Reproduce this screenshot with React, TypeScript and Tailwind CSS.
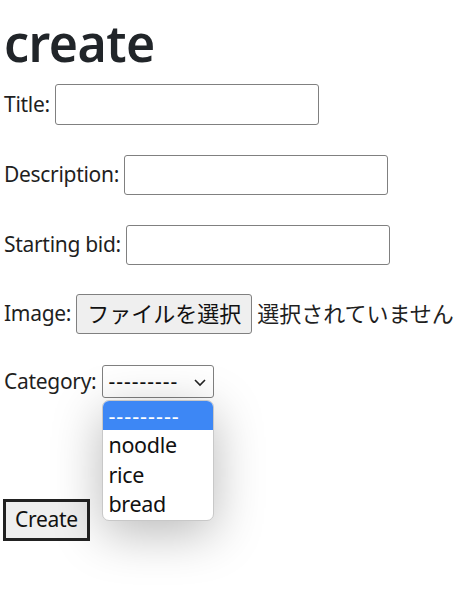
export default function App() {
  const font = "font-['Noto_Sans','Noto_Sans_CJK_JP',sans-serif]"

  return (
    <div className={`${font} min-h-[596px] bg-white pl-[4px] text-[21px] tracking-[-0.3px] text-[#1f1f1f]`}>
      {/* 見出し */}
      <h1 className="pt-[10px] text-[50px] font-semibold leading-[66px] tracking-[-0.5px] text-[#212529]">create</h1>

      <div className="mt-[8px] flex h-[41px] items-center">
        <span>Title:</span>
        <input className="ml-[5px] h-[41px] w-[264px] rounded-[3px] border border-[#808080] bg-white" />
      </div>

      <div className="mt-[29px] flex h-[41px] items-center">
        <span>Description:</span>
        <input className="ml-[5px] h-[40px] w-[264px] rounded-[3px] border border-[#808080] bg-white" />
      </div>

      <div className="mt-[29px] flex h-[41px] items-center">
        <span>Starting bid:</span>
        <input className="ml-[5px] h-[40px] w-[264px] rounded-[3px] border border-[#808080] bg-white" />
      </div>

      <div className="mt-[28px] flex h-[41px] items-center">
        <span>Image:</span>
        <button className="ml-[5px] h-[40px] rounded-[3px] border border-[#808080] bg-[#efefef] px-[10px] text-[22px] tracking-normal text-[#111]">
          ファイルを選択
        </button>
        <span className="ml-[5px] text-[22px] tracking-normal">選択されていません</span>
      </div>

      <div className="mt-[27px] flex h-[41px] items-center">
        <span>Category:</span>
        <div className="relative ml-[6px]">
          <div className="flex h-[33px] w-[112px] items-center justify-between rounded-[3px] border border-[#808080] bg-white pl-[5px] pr-[6px] text-[#111]">
            <span className="tracking-[1px]">---------</span>
            <svg width="14" height="14" viewBox="0 0 14 14" fill="none" stroke="#222" strokeWidth="1.6">
              <path d="M2 5l5 5 5-5" />
            </svg>
          </div>

          {/* 開いたドロップダウン */}
          <div className="absolute left-0 top-[35px] z-10 w-[112px] overflow-hidden rounded-[7px] border border-[#c8c8c8] bg-white text-[21.5px] shadow-[0_12px_50px_rgba(0,0,0,0.28)]">
            <div className="h-[29px] bg-[#3d87f5] pl-[5px] leading-[29px] tracking-[1px] text-white">---------</div>
            <div className="h-[30px] pl-[5px] leading-[30px] text-[#111]">noodle</div>
            <div className="h-[30px] pl-[5px] leading-[30px] text-[#111]">rice</div>
            <div className="h-[30px] pl-[5px] leading-[28px] text-[#111]">bread</div>
          </div>
        </div>
      </div>

      <button className="-ml-[1px] mt-[97px] h-[42px] border-[3px] border-[#222] bg-[#efefef] px-[9px] text-[#111]">
        Create
      </button>
    </div>
  )
}
